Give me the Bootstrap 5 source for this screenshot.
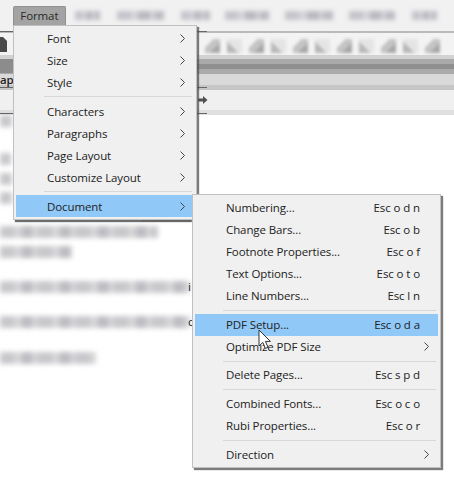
<!DOCTYPE html>
<html lang="en">
<head>
<meta charset="utf-8">
<link href="https://cdn.jsdelivr.net/npm/bootstrap@5.3.0/dist/css/bootstrap.min.css" rel="stylesheet">
<style>
html,body{height:100%}
body{background:#fff;overflow:hidden;font-family:"Open Sans","Noto Sans",sans-serif;font-size:11.5px;letter-spacing:-.1px;color:#222}
.app{width:454px;height:494px;position:relative;overflow:hidden}
.topbar{height:31px;background:#f1f1f1;padding-left:13px;padding-top:6px}
.fmt{width:54px;height:20px;background:#a3a3a3;border:1px solid #909090;border-bottom:0;border-radius:2px 2px 0 0;text-align:center;line-height:18px;color:#2a2a2a;margin-right:9px}
.blurword{height:9px;margin-top:5px;filter:blur(2px);background:linear-gradient(90deg,#c4c4cc 0 30%,#d4d4d8 30% 45%,#b8b8c0 45% 70%,#d0d0d4 70% 80%,#bcbcc4 80%)}
.bw26{width:26px;margin-right:17px}
.bw48{width:48px;margin-right:17px}
.bw30{width:30px;margin-right:15px}
.bw45{width:45px;margin-right:16px}
.bw49{width:49px;margin-right:16px}
.bw47{width:47px;margin-right:17px}
.tools{height:24px;background:#f3f3f3;border-top:2px solid #bababa;gap:7px;padding:6px 8px 0 205px}
.tools i{display:block;width:15px;height:14px;filter:blur(1.5px);background:linear-gradient(135deg,#f3f3f3 30%,#c4c4c4 30% 65%,#a8a8a8 65%)}
.tools i:nth-child(even){background:linear-gradient(45deg,#b8b8b8 40%,#e4e4e4 40%)}
.band1{height:4px;background:#d2d2d2}
.band2{height:5px;background:#aaa}
.band3{height:5px;background:#8f8f8f}
.band4{height:5px;background:#aaa}
.band5{height:11px;background:#d9d9d9}
.band6{height:5px;background:#c6c6c6}
.band7{height:20px;background:#f0f0f0}
.band8{height:5px;background:#e0e0e0}
.docline{height:12px;filter:blur(2.5px);background:repeating-linear-gradient(90deg,#c8c8cc 0 14px,#d6d6d8 14px 22px,#bcbcc2 22px 32px,#d4d4d6 32px 38px)}
.d1{width:12px;margin-bottom:26px}
.d2{width:11px;margin-bottom:8px}
.d3{width:12px;margin-bottom:7px}
.d4{width:12px;margin-bottom:22px}
.d5{width:158px;margin-bottom:8px}
.d6{width:72px;margin-bottom:23px}
.d7{width:190px;margin-bottom:23px}
.d8{width:190px;margin-bottom:24px}
.d9{width:96px}
.menu-pop{position:absolute;background:#f0f0f0;border:1px solid #c0c0c0;box-shadow:2px 2px 1px rgba(80,80,80,.75);padding:2px}
.main-pop{left:13px;top:25px;width:184px;padding-top:1px}
.sub-pop{left:192px;top:194px;width:249px}
.rowitem{height:22px;line-height:21px;padding-left:31px;padding-right:9px}
.kb{padding-right:18px}
.rowitem.on{background:#90c8f8}
.sep{height:1px;background:#d8d8d8;margin:3px 2px 3px 28px}
.sub-pop .sep{margin-bottom:2.5px}
.chev{width:5px;height:9px}
.curs{position:absolute;left:258px;top:329px;width:15px;height:22px}
.docshade{position:absolute;left:15px;top:218px;width:176px;height:4px;background:linear-gradient(90deg,#bcc8d2 127px,#a8a8a8 127px)}
.frag{position:absolute;color:#222}
.fa{left:188px;top:278px}
.fb{left:188px;top:313px}
.fap{left:0;top:71px;font-weight:600}
.docicon{position:absolute;left:0;top:37px;width:8px;height:16px}
.arrowic{position:absolute;left:198px;top:95px;width:10px;height:10px}
.leftband{position:absolute;left:0;top:59px;width:13px;height:14px;background:#8c8c8c}
.tick{position:absolute;left:0;width:13px;height:1px;background:#666}
.t1{top:31px}.t2{top:87px}.t3{top:113px}
.tr{position:absolute;left:197px;width:10px;height:1px;background:#666}
.r1{top:31px}.r2{top:87px}.r3{top:113px}
</style>
</head>
<body>
<div class="app">
  <div class="topbar d-flex">
    <div class="fmt">Format</div>
    <div class="blurword bw26"></div>
    <div class="blurword bw48"></div>
    <div class="blurword bw30"></div>
    <div class="blurword bw45"></div>
    <div class="blurword bw49"></div>
    <div class="blurword bw47"></div>
    <div class="blurword bw26"></div>
  </div>
  <div class="tools d-flex"><i></i><i></i><i></i><i></i><i></i><i></i><i></i><i></i><i></i><i></i><i></i></div>
  <div class="band1"></div><div class="band2"></div><div class="band3"></div><div class="band4"></div>
  <div class="band5"></div><div class="band6"></div><div class="band7"></div><div class="band8"></div>
  <div class="d-flex flex-column">
    <div class="docline d1"></div>
    <div class="docline d2"></div>
    <div class="docline d3"></div>
    <div class="docline d4"></div>
    <div class="docline d5"></div>
    <div class="docline d6"></div>
    <div class="docline d7"></div>
    <div class="docline d8"></div>
    <div class="docline d9"></div>
  </div>

  <div class="leftband"></div>
  <div class="tick t1"></div><div class="tick t2"></div><div class="tick t3"></div>
  <div class="tr r1"></div><div class="tr r2"></div><div class="tr r3"></div>
  <svg class="docicon" viewBox="0 0 8 16"><path d="M0 0H3L7 4V15H0Z" fill="#4a4a4a"/></svg>
  <span class="frag fap">ap</span>
  <svg class="arrowic" viewBox="0 0 10 10"><path d="M0 3.5H5V1L9.5 5 5 9V6.5H0Z" fill="#505050"/></svg>
  <span class="frag fa">i</span>
  <span class="frag fb">c</span>

  <div class="docshade"></div>
  <div class="menu-pop main-pop">
    <div class="rowitem d-flex justify-content-between align-items-center"><span>Font</span><svg class="chev" viewBox="0 0 5 9"><path d="M.5.5 4.5 4.5.5 8.5" fill="none" stroke="#444"/></svg></div>
    <div class="rowitem d-flex justify-content-between align-items-center"><span>Size</span><svg class="chev" viewBox="0 0 5 9"><path d="M.5.5 4.5 4.5.5 8.5" fill="none" stroke="#444"/></svg></div>
    <div class="rowitem d-flex justify-content-between align-items-center"><span>Style</span><svg class="chev" viewBox="0 0 5 9"><path d="M.5.5 4.5 4.5.5 8.5" fill="none" stroke="#444"/></svg></div>
    <div class="sep"></div>
    <div class="rowitem d-flex justify-content-between align-items-center"><span>Characters</span><svg class="chev" viewBox="0 0 5 9"><path d="M.5.5 4.5 4.5.5 8.5" fill="none" stroke="#444"/></svg></div>
    <div class="rowitem d-flex justify-content-between align-items-center"><span>Paragraphs</span><svg class="chev" viewBox="0 0 5 9"><path d="M.5.5 4.5 4.5.5 8.5" fill="none" stroke="#444"/></svg></div>
    <div class="rowitem d-flex justify-content-between align-items-center"><span>Page Layout</span><svg class="chev" viewBox="0 0 5 9"><path d="M.5.5 4.5 4.5.5 8.5" fill="none" stroke="#444"/></svg></div>
    <div class="rowitem d-flex justify-content-between align-items-center"><span>Customize Layout</span><svg class="chev" viewBox="0 0 5 9"><path d="M.5.5 4.5 4.5.5 8.5" fill="none" stroke="#444"/></svg></div>
    <div class="sep"></div>
    <div class="rowitem on d-flex justify-content-between align-items-center"><span>Document</span><svg class="chev" viewBox="0 0 5 9"><path d="M.5.5 4.5 4.5.5 8.5" fill="none" stroke="#444"/></svg></div>
  </div>

  <div class="menu-pop sub-pop">
    <div class="rowitem kb d-flex justify-content-between"><span>Numbering...</span><span>Esc o d n</span></div>
    <div class="rowitem kb d-flex justify-content-between"><span>Change Bars...</span><span>Esc o b</span></div>
    <div class="rowitem kb d-flex justify-content-between"><span>Footnote Properties...</span><span>Esc o f</span></div>
    <div class="rowitem kb d-flex justify-content-between"><span>Text Options...</span><span>Esc o t o</span></div>
    <div class="rowitem kb d-flex justify-content-between"><span>Line Numbers...</span><span>Esc l n</span></div>
    <div class="sep"></div>
    <div class="rowitem kb on d-flex justify-content-between"><span>PDF Setup...</span><span>Esc o d a</span></div>
    <div class="rowitem d-flex justify-content-between align-items-center"><span>Optimize PDF Size</span><svg class="chev" viewBox="0 0 5 9"><path d="M.5.5 4.5 4.5.5 8.5" fill="none" stroke="#444"/></svg></div>
    <div class="sep"></div>
    <div class="rowitem kb d-flex justify-content-between"><span>Delete Pages...</span><span>Esc s p d</span></div>
    <div class="sep"></div>
    <div class="rowitem kb d-flex justify-content-between"><span>Combined Fonts...</span><span>Esc o c o</span></div>
    <div class="rowitem kb d-flex justify-content-between"><span>Rubi Properties...</span><span>Esc o r</span></div>
    <div class="sep"></div>
    <div class="rowitem d-flex justify-content-between align-items-center"><span>Direction</span><svg class="chev" viewBox="0 0 5 9"><path d="M.5.5 4.5 4.5.5 8.5" fill="none" stroke="#444"/></svg></div>
  </div>

  <svg class="curs" viewBox="0 0 15 22"><path d="M1 1V17L4.8 13.4 7.4 19.4 10 18.2 7.4 12.4H12.4Z" fill="#fff" stroke="#333" stroke-width="1"/></svg>
</div>
</body>
</html>
